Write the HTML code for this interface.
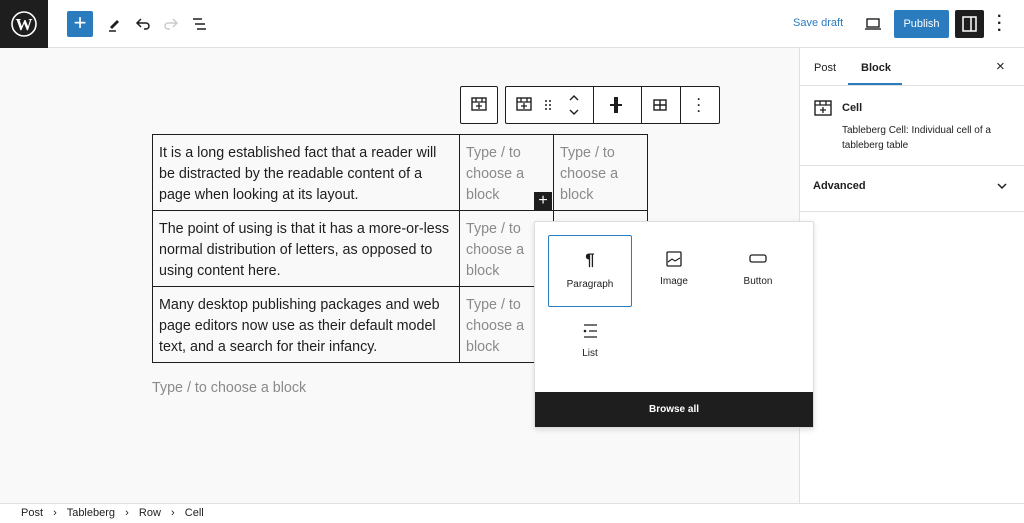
<!DOCTYPE html>
<html><head><meta charset="utf-8"><style>
*{box-sizing:border-box;margin:0;padding:0}
body{width:1024px;height:523px;overflow:hidden;font-family:"Liberation Sans",sans-serif;color:#1e1e1e;background:#fff;position:relative}
.a{position:absolute}
.canvas{left:0;top:48px;width:799px;height:455px;background:#f9f9f9}
.hdr{left:0;top:0;width:1024px;height:48px;background:#fff;border-bottom:1px solid #e0e0e0}
table{position:absolute;left:152px;top:134px;border-collapse:collapse;font-size:14.3px;line-height:21px}
td{border:1px solid #1e1e1e;vertical-align:top;padding:8px 6px 4px 6px;height:76px}
tr{height:76px}
td.p{color:#8a8a8a}
.tb{border:1px solid #1e1e1e;background:#fff;border-radius:2px;height:38px;top:86px}
.sep{position:absolute;top:0;width:1px;height:36px;background:#1e1e1e}
.side{left:799px;top:48px;width:225px;height:455px;border-left:1px solid #e0e0e0;background:#fff}
.foot{left:0;top:503px;width:1024px;height:20px;border-top:1px solid #e0e0e0;background:#fff;font-size:11px;color:#1e1e1e}
.pop{left:534px;top:221px;width:280px;height:207px;background:#fff;border:1px solid #ddd;box-shadow:0 2px 6px rgba(0,0,0,.12);border-radius:2px;z-index:5}
.it{position:absolute;width:84px;height:72px;text-align:center;font-size:10px}
.it svg{display:block;margin:16px auto 9px}
</style></head><body>
<div class="a canvas"></div>
<div class="a hdr"></div>
<div class="a" style="left:0;top:0;width:48px;height:48px;background:#1e1e1e">
<svg width="48" height="48" viewBox="0 0 48 48"><circle cx="24" cy="24" r="12" fill="none" stroke="#fff" stroke-width="1.6"/><text x="24" y="30" font-size="17" font-weight="bold" fill="#fff" text-anchor="middle" font-family="Liberation Serif">W</text></svg></div>
<div class="a" style="left:67px;top:11px;width:26px;height:26px;background:#2b7bbf;border-radius:2px;color:#fff;font-size:22px;line-height:24px;text-align:center">+</div>
<svg class="a" style="left:104px;top:14px" width="20" height="20" viewBox="0 0 20 20"><path d="M6 13 L13 6 L15 8 L8 15Z" fill="#1e1e1e"/><path d="M5 17h7" stroke="#1e1e1e" stroke-width="1.5"/></svg>
<svg class="a" style="left:133px;top:14px" width="20" height="20" viewBox="0 0 20 20"><path d="M5 9h8a3 3 0 0 1 0 6h-2M8 5L4 9l4 4" fill="none" stroke="#1e1e1e" stroke-width="1.5"/></svg>
<svg class="a" style="left:161px;top:14px" width="20" height="20" viewBox="0 0 20 20"><path d="M15 9H7a3 3 0 0 0 0 6h2M12 5l4 4-4 4" fill="none" stroke="#ccc" stroke-width="1.5"/></svg>
<svg class="a" style="left:190px;top:14px" width="20" height="20" viewBox="0 0 20 20"><path d="M3 5h9M5 10h10M7 15h9" stroke="#1e1e1e" stroke-width="1.5"/></svg>
<div class="a" style="left:793px;top:17px;font-size:11px;color:#2b7bbf">Save draft</div>
<svg class="a" style="left:863px;top:14px" width="20" height="20" viewBox="0 0 20 20"><rect x="4" y="5" width="12" height="8" fill="none" stroke="#1e1e1e" stroke-width="1.4"/><path d="M2 15h16" stroke="#1e1e1e" stroke-width="1.4"/></svg>
<div class="a" style="left:894px;top:10px;width:55px;height:28px;background:#2b7bbf;border-radius:2px;color:#fff;font-size:11px;line-height:28px;text-align:center">Publish</div>
<div class="a" style="left:955px;top:10px;width:29px;height:28px;background:#1e1e1e;border-radius:2px"><svg width="29" height="28"><rect x="8" y="7" width="13" height="14" fill="none" stroke="#fff" stroke-width="1.5"/><path d="M16 7v14" stroke="#fff" stroke-width="1.5"/></svg></div>
<div class="a" style="left:997px;top:13px;font-size:16px;font-weight:bold;line-height:7px">·<br>·<br>·</div>

<div class="a tb" style="left:460px;width:38px"><svg width="36" height="36"><rect x="11" y="11" width="14" height="12" fill="none" stroke="#1e1e1e" stroke-width="1.4"/><path d="M11 15h14M15 11v4M21 11v4M18 16v6M15 19h6" stroke="#1e1e1e" stroke-width="1.3"/></svg></div>
<div class="a tb" style="left:505px;width:215px">
<svg class="a" style="left:0;top:0" width="36" height="36"><rect x="11" y="11" width="14" height="12" fill="none" stroke="#1e1e1e" stroke-width="1.4"/><path d="M11 15h14M15 11v4M21 11v4M18 16v6M15 19h6" stroke="#1e1e1e" stroke-width="1.3"/></svg>
<svg class="a" style="left:38px;top:12px" width="8" height="12"><g fill="#1e1e1e"><circle cx="2" cy="2" r="1"/><circle cx="6" cy="2" r="1"/><circle cx="2" cy="6" r="1"/><circle cx="6" cy="6" r="1"/><circle cx="2" cy="10" r="1"/><circle cx="6" cy="10" r="1"/></g></svg>
<svg class="a" style="left:58px;top:5px" width="20" height="26"><path d="M6 8l4-4 4 4M6 18l4 4 4-4" fill="none" stroke="#1e1e1e" stroke-width="1.4"/></svg>
<div class="sep" style="left:87px"></div>
<svg class="a" style="left:100px;top:8px" width="20" height="20"><rect x="8" y="2" width="4" height="16" fill="#1e1e1e"/><path d="M4 10h12" stroke="#1e1e1e" stroke-width="2"/></svg>
<div class="sep" style="left:135px"></div>
<svg class="a" style="left:146px;top:10px" width="16" height="16"><rect x="2" y="3" width="12" height="10" fill="none" stroke="#1e1e1e" stroke-width="1.4"/><path d="M2 8h12M8 3v10" stroke="#1e1e1e" stroke-width="1.4"/></svg>
<div class="sep" style="left:174px"></div>
<div class="a" style="left:191px;top:9px;font-size:12px;font-weight:bold;line-height:6px">·<br>·<br>·</div>
</div>

<table><tr><td style="width:307px">It is a long established fact that a reader will be distracted by the readable content of a page when looking at its layout.</td><td class="p" style="width:94px">Type / to choose a block</td><td class="p" style="width:94px">Type / to choose a block</td></tr>
<tr><td>The point of using is that it has a more-or-less normal distribution of letters, as opposed to using content here.</td><td class="p">Type / to choose a block</td><td class="p"></td></tr>
<tr><td>Many desktop publishing packages and web page editors now use as their default model text, and a search for their infancy.</td><td class="p">Type / to choose a block</td><td class="p"></td></tr></table>
<div class="a" style="left:152px;top:380px;font-size:14.3px;color:#8a8a8a">Type / to choose a block</div>
<div class="a" style="left:534px;top:192px;width:18px;height:18px;background:#1e1e1e;color:#fff;font-size:16px;line-height:18px;text-align:center">+</div>

<div class="a side">
<div class="a" style="left:0;top:0;width:225px;height:38px;border-bottom:1px solid #e0e0e0"></div>
<div class="a" style="left:14px;top:14px;font-size:11px">Post</div>
<div class="a" style="left:61px;top:14px;font-size:11px;font-weight:bold">Block</div>
<div class="a" style="left:48px;top:35px;width:54px;height:2px;background:#2b7bbf"></div>
<div class="a" style="left:196px;top:10px;font-size:15px">×</div>
<svg class="a" style="left:14px;top:52px" width="18" height="16"><rect x="1" y="1" width="16" height="14" fill="none" stroke="#1e1e1e" stroke-width="1.4"/><path d="M1 5h16M6 1v4M12 1v4M9 7v6M6 10h6" stroke="#1e1e1e" stroke-width="1.3"/></svg>
<div class="a" style="left:42px;top:54px;font-size:11px;font-weight:bold">Cell</div>
<div class="a" style="left:42px;top:75px;font-size:10px;line-height:15px;width:175px">Tableberg Cell: Individual cell of a tableberg table</div>
<div class="a" style="left:0;top:117px;width:225px;height:1px;background:#e0e0e0"></div>
<div class="a" style="left:13px;top:132px;font-size:11px;font-weight:bold">Advanced</div>
<svg class="a" style="left:196px;top:132px" width="12" height="12"><path d="M2 4l4 4 4-4" fill="none" stroke="#1e1e1e" stroke-width="1.5"/></svg>
<div class="a" style="left:0;top:163px;width:225px;height:1px;background:#e0e0e0"></div>
</div>

<div class="a pop">
<div class="it" style="left:13px;top:13px;border:1.5px solid #2b7bbf;border-radius:2px"><div style="font-size:17px;font-weight:bold;margin:14px 0 9px">¶</div>Paragraph</div>
<div class="it" style="left:97px;top:13px"><svg width="16" height="16"><rect x="1" y="1" width="14" height="14" rx="1" fill="none" stroke="#1e1e1e" stroke-width="1.3"/><path d="M2 11l4-3 3 2 5-3" fill="none" stroke="#1e1e1e" stroke-width="1.1"/></svg>Image</div>
<div class="it" style="left:181px;top:13px"><svg width="18" height="16"><rect x="1" y="4" width="16" height="7" rx="2" fill="none" stroke="#1e1e1e" stroke-width="1.3"/></svg>Button</div>
<div class="it" style="left:13px;top:85px"><svg width="16" height="16"><path d="M2 2h13M7 8h8M2 14h13" stroke="#1e1e1e" stroke-width="1.3"/><circle cx="3" cy="8" r="1.3" fill="#1e1e1e"/></svg>List</div>
<div class="a" style="left:0;bottom:0;width:278px;height:35px;background:#1e1e1e;color:#fff;font-size:10px;font-weight:bold;line-height:35px;text-align:center">Browse all</div>
</div>

<div class="a foot"><div style="position:absolute;left:21px;top:3px;word-spacing:2px">Post &nbsp;›&nbsp; Tableberg &nbsp;›&nbsp; Row &nbsp;›&nbsp; Cell</div></div>
</body></html>
